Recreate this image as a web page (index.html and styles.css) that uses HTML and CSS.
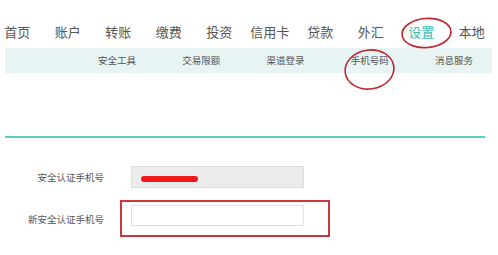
FILE: index.html
```html
<!DOCTYPE html>
<html lang="zh-CN">
<head>
    <meta charset="UTF-8">
    <meta name="viewport" content="width=device-width, initial-scale=1.0">
    <title>设置 - 手机号码</title>
    <link rel="stylesheet" href="styles.css">
</head>
<body>
    <div class="page">
        <ul class="nav">
            <li>首页</li>
            <li>账户</li>
            <li>转账</li>
            <li>缴费</li>
            <li>投资</li>
            <li>信用卡</li>
            <li>贷款</li>
            <li>外汇</li>
            <li class="active">设置</li>
            <li>本地</li>
        </ul>
        <ul class="subnav">
            <li>安全工具</li>
            <li>交易限额</li>
            <li>渠道登录</li>
            <li>手机号码</li>
            <li>消息服务</li>
        </ul>

        <div class="divider"></div>

        <form class="phone-form">
            <div class="form-row">
                <label>安全认证手机号</label>
                <div class="readonly-box"><span class="scribble"></span></div>
            </div>
            <div class="form-row">
                <label for="newPhone">新安全认证手机号</label>
                <div class="mark-box">
                    <input type="text" id="newPhone" name="newPhone">
                </div>
            </div>
        </form>

        <!-- hand-drawn annotation circles -->
        <svg class="marks" width="498" height="255" viewBox="0 0 498 255">
            <ellipse cx="426.5" cy="33" rx="24.5" ry="14.5" transform="rotate(-4 426.5 33)" />
            <ellipse cx="369.5" cy="69.5" rx="24.5" ry="19.5" transform="rotate(-8 369.5 69.5)" />
        </svg>
    </div>
</body>
</html>
```

FILE: styles.css
```css
body {
    margin: 0;
    padding: 0;
    background: #ffffff;
    font-family: "Noto Sans CJK SC", "Noto Sans", sans-serif;
    color: #444;
}
.page {
    position: relative;
    width: 498px;
    height: 255px;
    overflow: hidden;
}
ul {
    list-style: none;
    margin: 0;
    padding: 0;
}
.nav {
    display: flex;
    margin: 22px 0 0 -8px;
    height: 20px;
    line-height: 20px;
    font-size: 13px;
    color: #555;
}
.nav li {
    flex: 0 0 50.5px;
    text-align: center;
    white-space: nowrap;
}
.nav li.active {
    color: #3dbdb1;
}
.subnav {
    display: flex;
    margin: 6px 6px 0 5px;
    padding-left: 70px;
    height: 25px;
    line-height: 25px;
    background: #e8f4f4;
    font-size: 9.5px;
    color: #555;
}
.subnav li {
    flex: 0 0 84.25px;
    text-align: center;
    white-space: nowrap;
}
.divider {
    margin: 63px 0 0 5px;
    width: 480px;
    height: 2px;
    background: #5ccdc3;
}
.phone-form {
    margin-top: 28px;
}
.form-row {
    display: flex;
    align-items: center;
    margin-bottom: 12px;
}
.form-row label {
    width: 104px;
    margin-right: 16px;
    text-align: right;
    font-size: 9.5px;
    color: #555;
    white-space: nowrap;
}
.readonly-box {
    display: flex;
    align-items: center;
    margin-left: 11px;
    width: 171px;
    height: 20px;
    background: #ececec;
    border: 1px solid #dedede;
}
.scribble {
    display: block;
    margin: 3px 0 0 9px;
    width: 57px;
    height: 6px;
    border-radius: 4px;
    background: #f01818;
}
.mark-box {
    padding: 3px 24px 9px 9px;
    border: 2px solid #c9373f;
}
.mark-box input {
    display: block;
    box-sizing: border-box;
    width: 173px;
    height: 21px;
    margin: 0;
    padding: 0 4px;
    border: 1px solid #e0e0e0;
    background: #ffffff;
    font-size: 10px;
}
.marks {
    position: absolute;
    left: 0;
    top: 0;
    pointer-events: none;
}
.marks ellipse {
    fill: none;
    stroke: #c0262e;
    stroke-width: 1.6;
}
```
